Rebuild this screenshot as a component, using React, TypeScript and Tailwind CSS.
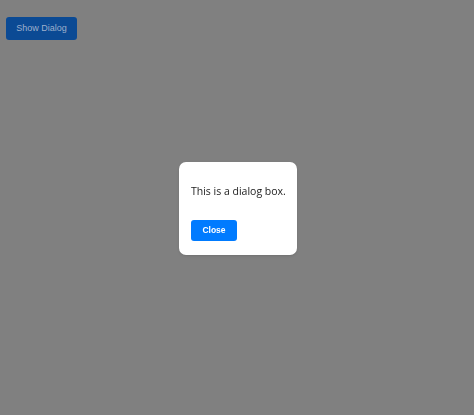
import React, { useState } from 'react';

export default function App() {
  const [open, setOpen] = useState(true);

  return (
    <div className="min-h-screen w-full bg-[#808080] relative" style={{ fontFamily: '"Liberation Sans", Arial, sans-serif' }}>
      <div className="pt-[17px] pl-[6px]">
        <button
          onClick={() => setOpen(true)}
          className="block w-[71px] h-[23px] rounded-[3px] bg-[#0b4a94] text-[#9eb0cc] text-[9px] leading-none"
        >
          Show Dialog
        </button>
      </div>

      {open && (
        <div className="fixed inset-0 flex items-center justify-center pl-[2px] pt-[2px]">
          <div className="w-[118px] h-[93px] bg-white rounded-[7px] shadow-sm px-[12px] pt-[22px]">
            <p className="text-[10.5px] leading-[14px] text-[#222] whitespace-nowrap" style={{ fontFamily: '"Open Sans", "Noto Sans", sans-serif' }}>
              This is a dialog box.
            </p>
            <button
              onClick={() => setOpen(false)}
              className="block mt-[22px] w-[46px] h-[21px] rounded-[3px] bg-[#007bff] text-white text-[8.5px] font-bold leading-none"
            >
              Close
            </button>
          </div>
        </div>
      )}
    </div>
  );
}
